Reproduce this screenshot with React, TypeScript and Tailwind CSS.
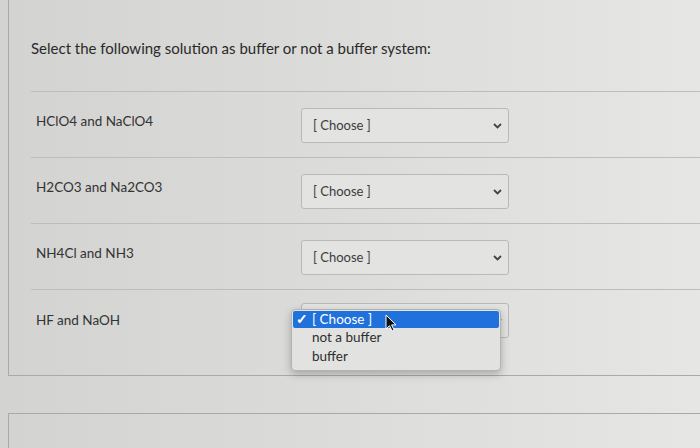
import React from 'react';

type Row = { label: string };

const rows: Row[] = [
  { label: 'HClO4 and NaClO4' },
  { label: 'H2CO3 and Na2CO3' },
  { label: 'NH4Cl and NH3' },
];

const Chevron = () => (
  <svg width="9" height="6" viewBox="0 0 9 6" className="text-[#444]">
    <path d="M1 1l3.5 3.5L8 1" fill="none" stroke="currentColor" strokeWidth="1.8" />
  </svg>
);

const SelectBox = ({ open = false, children }: { open?: boolean; children?: React.ReactNode }) => (
  <div className="relative w-[208px] h-[35px] border border-[#b9b9b6] rounded-[3px] bg-[#e3e3e1] flex items-center justify-between pl-[11px] pr-[6px]">
    {/* the open list covers the current value */}
    <span className={open ? 'invisible text-[13px]' : 'text-[13px] text-[#3c3c3c]'}>[ Choose ]</span>
    <Chevron />
    {children}
  </div>
);

const Cursor = () => (
  <svg width="12" height="18" viewBox="0 0 12 18" className="absolute left-[92px] top-[3px]">
    <path d="M1 1v14l3.5-3.3 2.6 5.3 2-1-2.5-5.1H11z" fill="#111" stroke="#fff" strokeWidth="1" />
  </svg>
);

const OpenMenu = () => (
  <div className="absolute left-[-11px] top-[5px] w-[210px] h-[62px] bg-[#e2e2e0] border border-[#b3b3b0] rounded-[4px] shadow-[0_3px_8px_rgba(0,0,0,0.25)] p-[1px] text-[13.5px] text-[#2e2e2e]">
    <div className="relative h-[17px] bg-[#2171dc] text-white flex items-center pl-[3px] rounded-[2px]">
      <span className="w-[16px] font-bold">✓</span>
      <span>[ Choose ]</span>
      <Cursor />
    </div>
    <div className="h-[19px] flex items-center pl-[19px]">not a buffer</div>
    <div className="h-[18px] flex items-center pl-[19px]">buffer</div>
  </div>
);

export default function App() {
  return (
    <div className="w-[700px] h-[448px] overflow-hidden bg-gradient-to-r from-[#d3d3d1] via-[#dcdcda] to-[#e6e6e4] font-['Lato','Liberation_Sans',sans-serif] pl-[8px]">
      {/* question panel */}
      <div className="border-l border-b border-[#a9a9a6] pl-[22px] h-[376px]">
        <h2 className="pt-[37px] h-[91px] text-[15px] text-[#2a2a2a]">
          Select the following solution as buffer or not a buffer system:
        </h2>

        {rows.map((row) => (
          <div key={row.label} className="border-t border-[#bdbdba] h-[66px] flex items-start">
            <div className="w-[270px] pl-[5px] pt-[19px] text-[13.5px] text-[#333]">{row.label}</div>
            <div className="pt-[16px]">
              <SelectBox />
            </div>
          </div>
        ))}

        <div className="border-t border-[#bdbdba] flex items-start">
          <div className="w-[270px] pl-[5px] pt-[20px] text-[13.5px] text-[#333]">HF and NaOH</div>
          <div className="pt-[13px]">
            <SelectBox open>
              <OpenMenu />
            </SelectBox>
          </div>
        </div>
      </div>

      {/* next question panel */}
      <div className="mt-[37px] border-l border-t border-[#a9a9a6] h-[40px]" />
    </div>
  );
}
